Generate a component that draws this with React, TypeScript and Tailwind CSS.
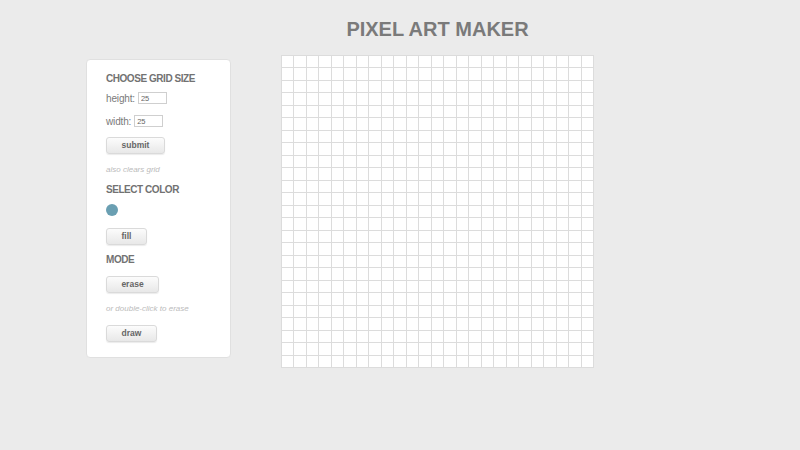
import React from "react";

const N = 25;

function Btn({ label, w }: { label: string; w: string }) {
  return (
    <button
      type="button"
      className={`${w} block h-[17px] rounded-[3px] border border-[#dadada] bg-gradient-to-b from-[#fcfcfc] to-[#e8e8e8] text-[8.5px] leading-[15px] font-bold text-[#666] shadow-[0_1px_1px_rgba(0,0,0,0.08)]`}
    >
      {label}
    </button>
  );
}

export default function App() {
  const cells = Array.from({ length: N * N });
  return (
    <div className="min-h-[450px] w-[800px] bg-[#ebebeb] font-['Liberation_Sans',Arial,sans-serif]">
      <div className="flex pl-[86px]">
        <div className="mt-[59px] h-[299px] w-[145px] rounded-[4px] border border-[#e0e0e0] bg-white px-[19px] pt-[13px]">
          <h2 className="whitespace-nowrap text-[10px] leading-[12px] font-bold tracking-[-0.45px] text-[#727272]">CHOOSE GRID SIZE</h2>
          <div className="mt-[7px] flex h-[12px] items-center text-[10px] tracking-[-0.15px] text-[#7a7a7a]">
            <span>height:</span>
            <input
              readOnly
              value="25"
              className="ml-[3px] h-[12px] w-[29px] border border-[#cfcfcf] px-[2px] text-[7.5px] text-[#666] outline-none"
            />
          </div>
          <div className="mt-[11px] flex h-[12px] items-center text-[10px] tracking-[-0.15px] text-[#7a7a7a]">
            <span>width:</span>
            <input
              readOnly
              value="25"
              className="ml-[3px] h-[12px] w-[29px] border border-[#cfcfcf] px-[2px] text-[7.5px] text-[#666] outline-none"
            />
          </div>
          <div className="mt-[10px]">
            <Btn label="submit" w="w-[59px]" />
          </div>
          <p className="mt-[11px] whitespace-nowrap text-[8px] leading-[10px] italic text-[#bbb]">also clears grid</p>
          <h2 className="mt-[9px] text-[10px] leading-[12px] font-bold tracking-[-0.45px] text-[#727272]">SELECT COLOR</h2>
          <div className="mt-[8px] h-[12px] w-[12px] rounded-full bg-[#6a9fb2]" />
          <div className="mt-[12px]">
            <Btn label="fill" w="w-[41px]" />
          </div>
          <h2 className="mt-[9px] text-[10px] leading-[12px] font-bold tracking-[-0.45px] text-[#727272]">MODE</h2>
          <div className="mt-[10px]">
            <Btn label="erase" w="w-[53px]" />
          </div>
          <p className="mt-[11px] whitespace-nowrap text-[8px] leading-[10px] italic text-[#bbb]">or double-click to erase</p>
          <div className="mt-[11px]">
            <Btn label="draw" w="w-[51px]" />
          </div>
        </div>
        <div className="ml-[50px] flex flex-col items-center">
          <h1 className="mt-[17px] text-[20px] leading-[24px] font-bold text-[#7a7a7a]">PIXEL ART MAKER</h1>
          <div className="mt-[14px] grid h-[313px] w-[313px] grid-cols-[repeat(25,1fr)] grid-rows-[repeat(25,1fr)] border-t border-l border-[#dcdcdc] bg-white">
            {cells.map((_, i) => (
              <div key={i} className="border-r border-b border-[#dcdcdc]" />
            ))}
          </div>
        </div>
      </div>
    </div>
  );
}
